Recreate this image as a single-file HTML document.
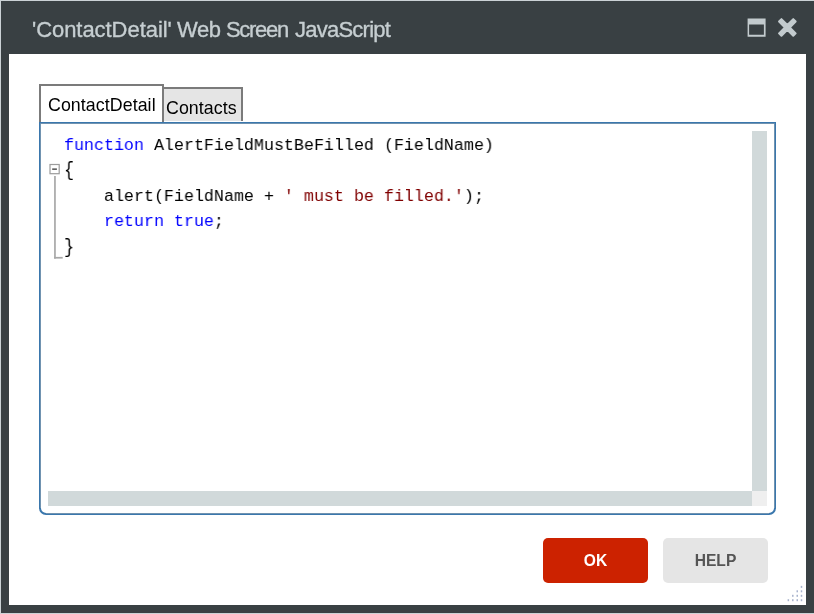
<!DOCTYPE html>
<html><head><meta charset="utf-8">
<style>
html,body{margin:0;padding:0;}
*{-webkit-font-smoothing:antialiased;}
body{width:814px;height:614px;position:relative;overflow:hidden;background:#cbd2d5;font-family:"Liberation Sans",sans-serif;}
.abs{position:absolute;}
.abs,.btxt{will-change:transform;}
#frame{left:1px;top:1px;width:813px;height:612px;background:#394043;}
#client{left:9px;top:54px;width:797px;height:551px;background:#fff;}
.title{top:16px;font-size:22px;-webkit-text-stroke:0.35px #c6ced1;line-height:28px;color:#c6ced1;white-space:pre;}
.tab{box-sizing:border-box;border:2px solid #7b7b7b;border-bottom:none;}
#tab1{left:39px;top:84px;width:125px;height:38px;background:#fff;}
#tab2{left:162px;top:87px;width:81px;height:34px;background:#e5e5e5;}
.tabtxt{font-size:17.8px;color:#000;white-space:pre;line-height:20px;}
#vscroll{left:752px;top:131px;width:15px;height:360px;background:#d1d9da;}
#hscroll{left:48px;top:491px;width:704px;height:15px;background:#d1d9da;}
#corner{left:752px;top:491px;width:15px;height:15px;background:#efefef;}
.code{font-family:"Liberation Mono",monospace;font-size:17.4px;line-height:20px;white-space:pre;color:#000;transform-origin:0 0;transform:scaleX(0.9579);}
.kw{color:#0000ff;}
.br{display:inline-block;transform-origin:50% 55%;transform:translateY(1px) scaleY(1.14);}
.str{color:#800000;}
.btn{border-radius:5px;text-align:center;font-weight:bold;font-size:15.6px;}
#ok{left:543px;top:538px;width:105px;height:45px;background:#cc2200;color:#fff;}
#help{left:663px;top:538px;width:105px;height:45px;background:#e5e5e5;color:#555;}
.btxt{position:absolute;left:0;width:100%;top:14px;line-height:17px;}
</style></head>
<body>
<div id="frame" class="abs"></div>
<div id="client" class="abs"></div>
<div class="abs title" style="left:32px;letter-spacing:-0.05px;">'ContactDetail'</div>
<div class="abs title" style="left:177px;letter-spacing:-0.4px;">Web</div>
<div class="abs title" style="left:226px;letter-spacing:-1.3px;">Screen</div>
<div class="abs title" style="left:295px;letter-spacing:-0.76px;">JavaScript</div>
<!-- maximize icon -->
<svg class="abs" style="left:740px;top:10px" width="64" height="36" viewBox="0 0 64 36">
  <path d="M7.6 8.4H25.6V26.7H7.6ZM9.1 14.6V24.8H23.9V14.6Z" fill="#c3cbce" fill-rule="evenodd"/>
  <polygon points="49.75,17.45 55.65,23.35 53.25,25.75 47.35,19.85 41.45,25.75 39.05,23.35 44.95,17.45 39.05,11.55 41.45,9.15 47.35,15.05 53.25,9.15 55.65,11.55" fill="#c3cbce" stroke="#c3cbce" stroke-width="2" stroke-linejoin="round"/>
</svg>

<div id="tab1" class="abs tab"></div>
<div id="tab2" class="abs tab"></div>
<div class="abs tabtxt" style="left:48px;top:95px;letter-spacing:0.07px;">ContactDetail</div>
<div class="abs tabtxt" style="left:166px;top:98px;letter-spacing:0.05px;">Contacts</div>

<svg class="abs" style="left:0;top:0" width="814" height="614"><path d="M40 123H775V508A6 6 0 0 1 769 514H46A6 6 0 0 1 40 508Z" fill="none" stroke="#3a77ad" stroke-width="2"/><path d="M40.5 123.5H774.5V508M769 513.5H46M40.5 508V123.5" fill="none" stroke="#7193b0" stroke-width="1"/></svg>
<div id="vscroll" class="abs"></div>
<div id="hscroll" class="abs"></div>
<div id="corner" class="abs"></div>

<div class="abs code" style="left:64px;top:136px;"><span class="kw">function</span> AlertFieldMustBeFilled (FieldName)</div>
<div class="abs code" style="left:64px;top:161px;"><span class="br">{</span></div>
<div class="abs code" style="left:64px;top:187px;">    alert(FieldName + <span class="str">' must be filled.'</span>);</div>
<div class="abs code" style="left:64px;top:212px;">    <span class="kw">return</span> <span class="kw">true</span>;</div>
<div class="abs code" style="left:64px;top:238px;"><span class="br">}</span></div>

<!-- fold marker -->
<svg class="abs" style="left:44px;top:160px" width="24" height="104" viewBox="0 0 24 104">
  <rect x="6" y="4.5" width="9.2" height="9.2" fill="#fff" stroke="#9c9c9c" stroke-width="1.2"/>
  <rect x="8.2" y="8.4" width="4.7" height="1.5" fill="#505050"/>
  <rect x="10.1" y="16" width="1.7" height="82.6" fill="#a8a8a8"/>
  <rect x="10.1" y="96.9" width="8.6" height="1.7" fill="#a8a8a8"/>
</svg>

<div id="ok" class="abs btn"><span class="btxt">OK</span></div>
<div id="help" class="abs btn"><span class="btxt">HELP</span></div>

<!-- resize grip -->
<svg class="abs" style="left:782px;top:582px" width="26" height="26" viewBox="0 0 26 26"><g fill="#a8b3cd"><rect x="18.75" y="3.87" width="1.5" height="2"/><rect x="14.50" y="8.30" width="1.5" height="2"/><rect x="18.75" y="8.30" width="1.5" height="2"/><rect x="10.05" y="12.80" width="1.5" height="2"/><rect x="14.50" y="12.80" width="1.5" height="2"/><rect x="18.75" y="12.80" width="1.5" height="2"/><rect x="5.61" y="17.20" width="1.5" height="2"/><rect x="10.05" y="17.20" width="1.5" height="2"/><rect x="14.50" y="17.20" width="1.5" height="2"/><rect x="18.75" y="17.20" width="1.5" height="2"/></g></svg>
</body></html>
